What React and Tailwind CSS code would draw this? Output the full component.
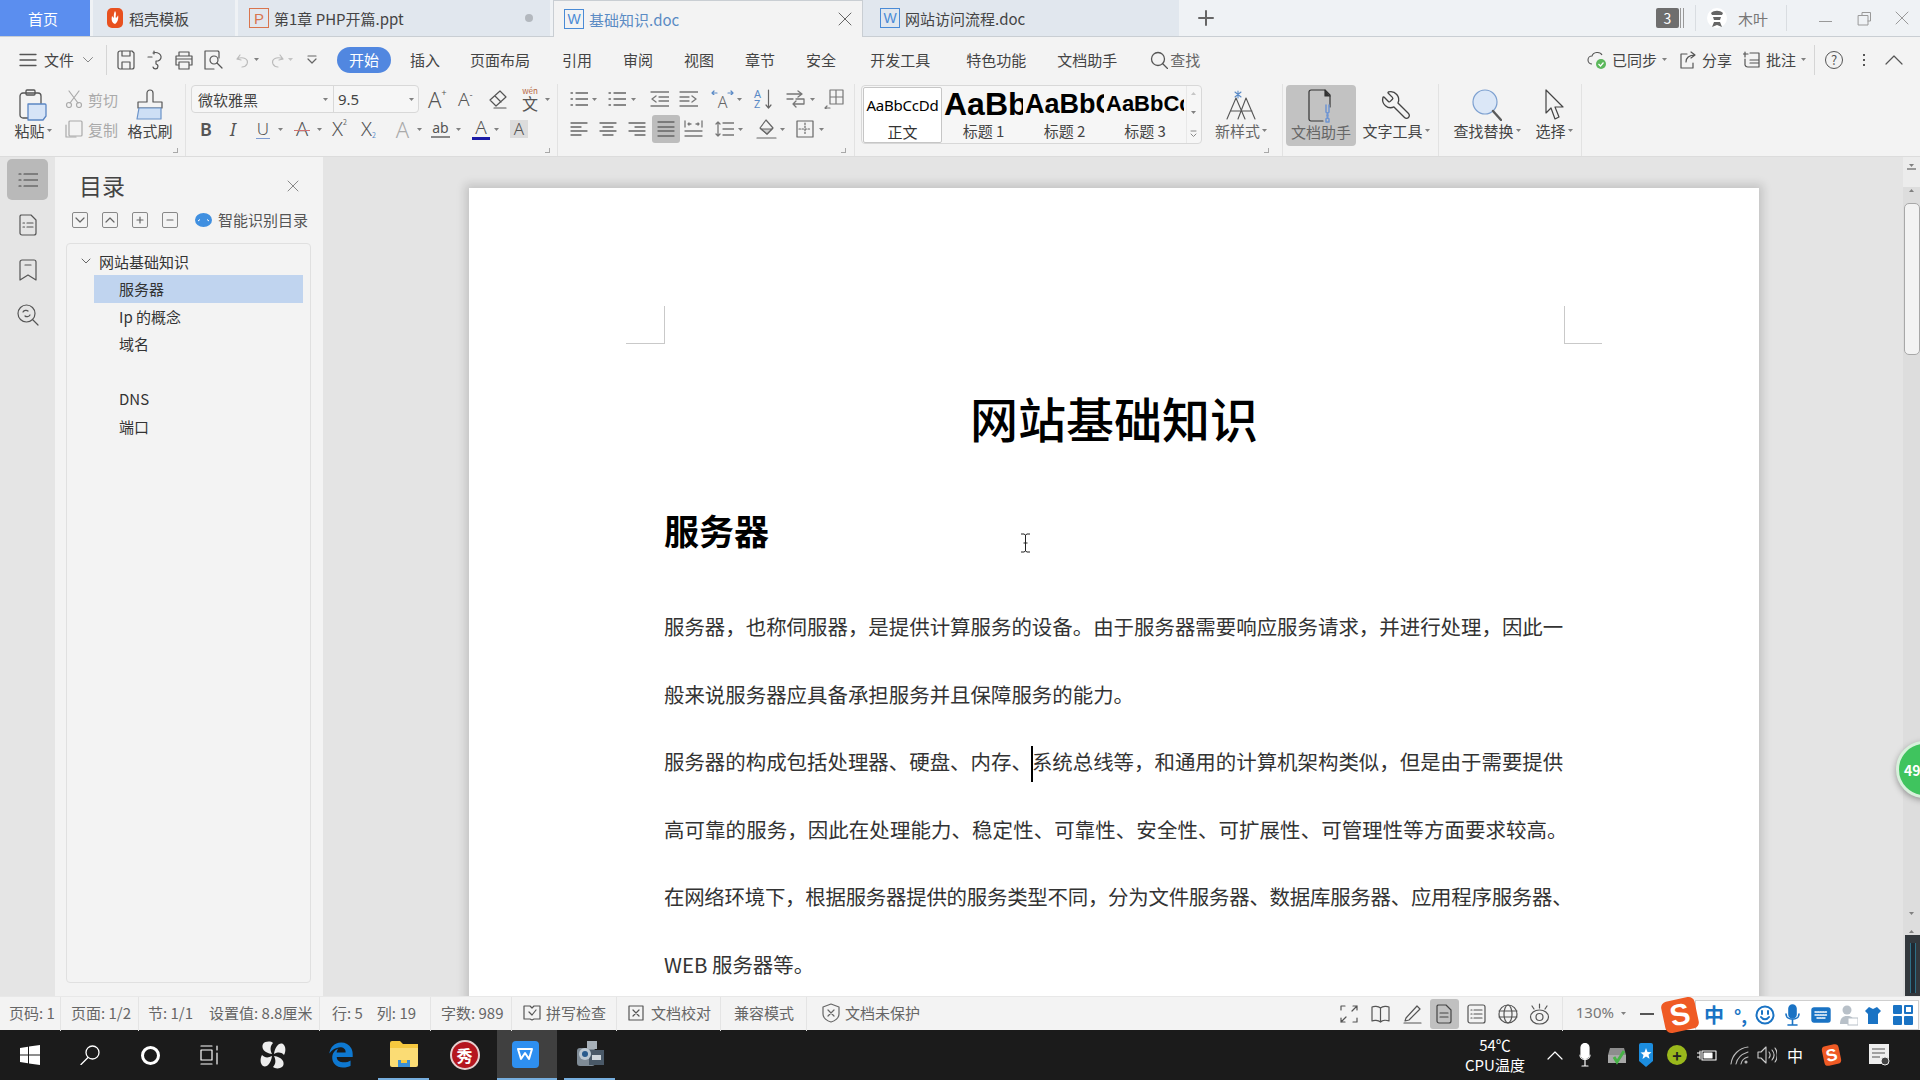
import React from 'react';
import { FaEdgeLegacy } from 'react-icons/fa';
import { Wrench } from 'lucide-react';

const I = ({ w = 20, h = 20, vb, c = '#555', sw = 1.2, className = '', children }) => (
  <svg width={w} height={h} viewBox={vb || `0 0 ${w} ${h}`} fill="none" stroke={c} strokeWidth={sw} strokeLinecap="round" strokeLinejoin="round" className={`shrink-0 ${className}`}>{children}</svg>
);
const Caret = ({ className = '' }) => (
  <svg width="5" height="3" viewBox="0 0 5 3" className={`shrink-0 ${className}`}><path d="M0 0h5L2.5 3z" fill="#808080" /></svg>
);
const Corner = ({ className = '' }) => <div className={`absolute bottom-[3px] w-[5px] h-[5px] border-r border-b border-[#a8a8a8] ${className}`} />;
const Lines = ({ rows, w = 18, className = '' }) => (
  <I w={w} h={18} c="#666" sw={1.3} className={className}>
    {rows.map((r, i) => <path key={i} d={`M${r[0]} ${r[2]}H${r[1]}`} />)}
  </I>
);
const Big = ({ icon, label, caret, className = '', muted }) => (
  <div className={`flex flex-col items-center ${className}`}>
    <div className="h-[38px] mt-[2px] flex items-center justify-center">{icon}</div>
    <div className={`h-[20px] -mt-[4px] flex items-center text-[15px] leading-none whitespace-nowrap ${muted ? 'text-[#666]' : 'text-[#444]'}`}>
      {label}{caret && <Caret className="ml-[2px]" />}
    </div>
  </div>
);

function TitleBar() {
  return (
    <div className="h-[37px] bg-[#eff2f5] border-b border-[#c9ced3] flex text-[15px] leading-none text-[#444]">
      <div className="w-[90px] h-[36px] bg-[#5b8eef] text-white flex items-center justify-center pr-[4px]">首页</div>
      <div className="w-[142px] h-[36px] ml-[3px] bg-[#e1e7ee] flex items-center pl-[14px]">
        <svg width="16" height="20" viewBox="0 0 16 20" className="shrink-0"><rect width="16" height="20" rx="5" fill="#e8511f" /><path d="M8 3c2 3 0 5 1 7 1-1 2-2 2-3 1 4-1 8-3 9-3-1-4-4-3-8l2 2c-.5-3 0-5 1-7z" fill="#fff" /></svg>
        <span className="ml-[6px]">稻壳模板</span>
      </div>
      <div className="w-[312px] h-[36px] ml-[3px] bg-[#e1e7ee] flex items-center pl-[11px]">
        <div className="w-[20px] h-[20px] border border-[#d9754e] flex items-center justify-center text-[#d9754e] text-[15px] leading-none font-['Liberation_Sans',sans-serif] shrink-0">P</div>
        <span className="ml-[5px] whitespace-nowrap">第1章 PHP开篇.ppt</span>
        <div className="w-[8px] h-[8px] rounded-full bg-[#b3b8be] ml-auto mr-[17px]" />
      </div>
      <div className="w-[310px] h-[37px] ml-[3px] bg-[#f3f3f3] border-x border-t border-[#c9ced3] flex items-center pl-[10px]">
        <div className="w-[20px] h-[20px] border border-[#4a8bd6] flex items-center justify-center text-[#4a8bd6] text-[14px] leading-none font-['Liberation_Sans',sans-serif] shrink-0">W</div>
        <span className="ml-[5px] text-[#5b8bc4] whitespace-nowrap">基础知识.doc</span>
        <I w={14} h={14} c="#666" sw={1} className="ml-auto mr-[10px]"><path d="M1 1l12 12M13 1L1 13" /></I>
      </div>
      <div className="w-[316px] h-[36px] bg-[#e1e7ee] flex items-center pl-[17px]">
        <div className="w-[20px] h-[20px] border border-[#4a8bd6] flex items-center justify-center text-[#4a8bd6] text-[14px] leading-none font-['Liberation_Sans',sans-serif] shrink-0">W</div>
        <span className="ml-[5px] whitespace-nowrap">网站访问流程.doc</span>
      </div>
      <I w={16} h={16} c="#666" sw={2} className="ml-[19px] mt-[10px]"><path d="M8 1v14M1 8h14" /></I>
      <div className="flex-1" />
      <div className="flex items-center h-[36px]">
        <div className="w-[23px] h-[20px] bg-[#6e6e6e] rounded-[2px] text-white text-[14px] flex items-center justify-center">3</div>
        <div className="w-[4px] h-[20px] ml-[1px] border-x border-[#999]" />
        <div className="w-px h-[26px] bg-[#d9dde1] ml-[11px]" />
        <svg width="20" height="24" viewBox="0 0 20 24" className="ml-[11px] shrink-0"><circle cx="10" cy="12" r="10" fill="#fff" /><path d="M4 7c3-3 9-3 12 0l-1 2H5zM6 11h8l-1 3H7zM7 16h6l2 5-5-2-5 2z" fill="#666" /></svg>
        <span className="ml-[11px] text-[#777]">木叶</span>
        <div className="w-px h-[26px] bg-[#d9dde1] ml-[18px]" />
        <div className="w-[13px] h-px bg-[#999] ml-[32px] mt-[6px]" />
        <I w={15} h={15} c="#999" sw={1} className="ml-[25px]"><path d="M5 4V1.5h8.5V10H11M1.5 4.5H11V14H1.5z" /></I>
        <I w={14} h={14} c="#999" sw={1} className="ml-[23px] mr-[11px]"><path d="M1 1l12 12M13 1L1 13" /></I>
      </div>
    </div>
  );
}

function MenuRow() {
  return (
    <div className="h-[47px] pb-[2px] flex items-center text-[15px] leading-none text-[#444] bg-[#f3f3f3]">
      <I w={18} h={14} c="#555" sw={1.3} className="ml-[19px]"><path d="M1 1.5h16M1 7h16M1 12.5h16" /></I>
      <span className="ml-[7px]">文件</span>
      <I w={10} h={6} c="#888" sw={1} className="ml-[9px]"><path d="M.5.5L5 5 9.5.5" /></I>
      <div className="w-px h-[30px] bg-[#d5d5d5] ml-[13px]" />
      <I w={18} h={20} c="#555" className="ml-[10px]"><path d="M3 1h12l2 2v14a2 2 0 0 1-2 2H3a2 2 0 0 1-2-2V3a2 2 0 0 1 2-2zM5 1v5h8V1M5 19v-7h8v7" /></I>
      <I w={18} h={20} c="#555" className="ml-[12px]"><path d="M6 3a5 4 0 1 1 5 8H9v3M9 14a2.5 2.5 0 1 1-3 3M1 7h4M7 1v3" /></I>
      <I w={18} h={20} c="#555" className="ml-[10px]"><path d="M4 6V2h10v4M4 15H1V6h16v9h-3M4 12h10v7H4zM1 9h16" /></I>
      <I w={20} h={20} c="#555" className="ml-[10px]"><path d="M15 1H2v18h9M15 1l1 1v6" /><circle cx="11" cy="10" r="4" /><path d="M14 13l5 5" /></I>
      <I w={14} h={16} c="#bbb" className="ml-[13px]"><path d="M4 3L1 7l4 1M1 7c6-3 12 0 10 5-1 2-3 3-5 3" /></I>
      <Caret className="ml-[4px]" />
      <I w={14} h={16} c="#bbb" className="ml-[11px]"><path d="M10 3l3 4-4 1M13 7C7 4 1 7 3 12c1 2 3 3 5 3" /></I>
      <Caret className="ml-[4px] opacity-40" />
      <I w={10} h={10} c="#666" className="ml-[14px]"><path d="M1 1h8M1 4l4 4 4-4" /></I>
      <div className="w-[54px] h-[26px] rounded-full bg-[#5187e0] text-white flex items-center justify-center ml-[20px]">开始</div>
      <span className="ml-[19px]">插入</span>
      <span className="ml-[30px]">页面布局</span>
      <span className="ml-[32px]">引用</span>
      <span className="ml-[31px]">审阅</span>
      <span className="ml-[31px]">视图</span>
      <span className="ml-[31px]">章节</span>
      <span className="ml-[31px]">安全</span>
      <span className="ml-[34px]">开发工具</span>
      <span className="ml-[36px]">特色功能</span>
      <span className="ml-[31px]">文档助手</span>
      <I w={18} h={18} c="#555" sw={1.3} className="ml-[33px]"><circle cx="8" cy="8" r="6.5" /><path d="M12.5 12.5l5 5" /></I>
      <span className="ml-[2px] text-[#666]">查找</span>
      <div className="flex-1" />
      <svg width="20" height="20" viewBox="0 0 20 20" fill="none" className="shrink-0"><path d="M5 14a4 4 0 0 1 0-8c1-4 8-5 10-1" stroke="#555" strokeWidth="1.1" /><circle cx="14" cy="14" r="5" fill="#5cb85c" /><path d="M11.5 14l2 2 3-3.5" stroke="#fff" strokeWidth="1.2" /></svg>
      <span className="ml-[5px]">已同步</span>
      <Caret className="ml-[5px]" />
      <I w={18} h={18} c="#555" className="ml-[12px]"><path d="M8 3H2v14h12v-5M7 11c0-4 3-7 9-7M12 1l4 3-4 3" /></I>
      <span className="ml-[5px]">分享</span>
      <I w={18} h={18} c="#555" className="ml-[11px]"><path d="M7 2h9v14H5a3 3 0 0 1-3-2V8M7 9h9M7 12h9M2 1v5M0 3h5" /></I>
      <span className="ml-[5px]">批注</span>
      <Caret className="ml-[5px]" />
      <div className="w-px h-[30px] bg-[#d5d5d5] ml-[8px]" />
      <div className="w-[18px] h-[18px] rounded-full border border-[#555] ml-[10px] flex items-center justify-center text-[13px] text-[#555]">?</div>
      <div className="ml-[20px] flex flex-col gap-[3px]"><div className="w-[2px] h-[2px] bg-[#555]" /><div className="w-[2px] h-[2px] bg-[#555]" /><div className="w-[2px] h-[2px] bg-[#555]" /></div>
      <I w={18} h={10} c="#555" className="ml-[20px] mr-[17px]"><path d="M1 9l8-8 8 8" /></I>
    </div>
  );
}

function FontGroup() {
  const A = 'text-[#555] font-["Noto_Sans",sans-serif] leading-none shrink-0';
  return (
    <div className="relative w-[372px] border-r border-[#e2e2e2] pl-[5px]">
      <div className="h-[30px] flex items-center">
        <div className="w-[228px] h-[28px] rounded-[4px] border border-[#d8d8d8] bg-[#f6f6f6] flex items-center text-[15px] leading-none text-[#444]">
          <span className="ml-[6px]">微软雅黑</span>
          <Caret className="ml-[65px]" />
          <div className="w-px h-[26px] bg-[#d8d8d8] ml-[5px]" />
          <span className="ml-[4px] font-['Noto_Sans',sans-serif]">9.5</span>
          <Caret className="ml-auto mr-[4px]" />
        </div>
        <div className="w-[18px] ml-[9px] flex items-start"><span className={`${A} text-[22px] font-light`}>A</span><span className="text-[9px] leading-none text-[#555]">+</span></div>
        <div className="w-[16px] ml-[12px] flex items-start"><span className={`${A} text-[19px] font-light`}>A</span><span className="text-[9px] leading-none text-[#555]">-</span></div>
        <I w={22} h={20} c="#555" className="ml-[14px]"><path d="M12 2L2 11l6 6 10-9zM2 11l6 6M7 7l6 6M6 19h12" /></I>
        <div className="w-[16px] ml-[12px] flex flex-col items-center"><span className="text-[8px] leading-none text-[#b5653c]">wén</span><span className="text-[16px] leading-none text-[#555]">文</span></div>
        <Caret className="ml-[7px]" />
      </div>
      <div className="h-[30px] flex items-center">
        <span className={`${A} ml-[9px] w-[12px] text-[18px] font-semibold`}>B</span>
        <span className={`${A} ml-[18px] w-[8px] text-[18px] italic`}>I</span>
        <div className="ml-[18px] w-[14px] flex flex-col items-center"><span className={`${A} text-[17px] font-light`}>U</span><div className="w-[14px] h-px bg-[#7d9bd1] mt-[1px]" /></div>
        <Caret className="ml-[8px]" />
        <span className={`${A} ml-[11px] w-[16px] text-[20px] font-light relative text-center`}>A<span className="absolute left-0 right-0 top-[11px] h-px bg-[#d07070]" /></span>
        <Caret className="ml-[7px]" />
        <div className="ml-[10px] w-[18px] flex items-start"><span className={`${A} text-[20px] font-light`}>X</span><span className="text-[7px] leading-none text-[#666]">2</span></div>
        <div className="ml-[11px] w-[17px] flex items-end"><span className={`${A} text-[20px] font-light`}>X</span><span className="text-[7px] leading-none text-[#5a8ac6]">2</span></div>
        <span className={`${A} ml-[15px] w-[19px] text-[22px] font-light text-[#aaa] text-center`}>A</span>
        <Caret className="ml-[5px]" />
        <div className="ml-[9px] w-[19px] border-b-2 border-[#888] text-[14px] leading-[16px] text-[#555] text-center font-['Noto_Sans',sans-serif]">ab</div>
        <Caret className="ml-[6px]" />
        <div className="ml-[11px] w-[18px] border-b-[3px] border-[#1a1aa6] text-[19px] leading-[19px] text-[#555] text-center font-['Noto_Sans',sans-serif] font-light">A</div>
        <Caret className="ml-[4px]" />
        <div className="ml-[11px] w-[18px] h-[18px] bg-[#dcdcdc] text-[17px] leading-[18px] text-[#555] text-center font-['Noto_Sans',sans-serif] font-light">A</div>
      </div>
      <Corner className="right-[7px]" />
    </div>
  );
}

function ParaGroup() {
  const list = (
    <I w={18} h={18} c="#666" sw={1.3}><path d="M6 3h12M6 9h12M6 15h12M1 3h1.5M1 9h1.5M1 15h1.5" /></I>
  );
  return (
    <div className="relative w-[297px] border-r border-[#e2e2e2]">
      <div className="h-[30px] flex items-center">
        <div className="ml-[12px]">{list}</div>
        <Caret className="ml-[4px]" />
        <div className="ml-[11px]">{list}</div>
        <Caret className="ml-[5px]" />
        <I w={19} h={18} c="#777" sw={1.3} className="ml-[14px]"><path d="M1 2h18M9 7h10M9 11h10M1 16h18M6 6L2 9l4 3" /></I>
        <I w={19} h={18} c="#777" sw={1.3} className="ml-[10px]"><path d="M1 2h18M1 7h9M1 11h9M1 16h18M13 6l4 3-4 3" /></I>
        <div className="ml-[13px] w-[23px] flex flex-col items-center relative text-[#666]"><I w={23} h={5} c="#5a8ac6"><path d="M1 3h5M3 1L1 3l2 2M22 3h-5M20 1l2 2-2 2" /></I><span className="text-[16px] leading-[14px] font-['Noto_Sans',sans-serif] font-light">A</span></div>
        <Caret className="ml-[3px]" />
        <div className="ml-[12px] w-[10px] flex flex-col text-[11px] leading-[10px] text-[#5a8ac6] font-['Noto_Sans',sans-serif]"><span>A</span><span>Z</span></div>
        <I w={7} h={20} c="#666" className="ml-[1px]"><path d="M3.5 1v18M1 16l2.5 3L6 16" /></I>
        <I w={19} h={18} c="#777" sw={1.3} className="ml-[14px]"><path d="M1 4h15M12 1l4 3-4 3M1 9h6M10 9h8M18 9v5H7M10 11l-3 3 3 3" /></I>
        <Caret className="ml-[5px]" />
        <I w={20} h={20} c="#777" className="ml-[9px]"><path d="M6 1h13v14H6M6 1v14M6 8h13M12 1v14M1 19h5M3 17l-2 2 2 2" /></I>
      </div>
      <div className="h-[30px] flex items-center">
        <Lines className="ml-[12px]" rows={[[1, 17, 3], [1, 11, 7], [1, 17, 11], [1, 11, 15]]} />
        <Lines className="ml-[11px]" rows={[[1, 17, 3], [4, 14, 7], [1, 17, 11], [4, 14, 15]]} />
        <Lines className="ml-[11px]" rows={[[1, 17, 3], [7, 17, 7], [1, 17, 11], [7, 17, 15]]} />
        <div className="ml-[6px] w-[28px] h-[28px] rounded-[3px] bg-[#bdbdbd] flex items-center justify-center">
          <Lines rows={[[1, 17, 2], [1, 17, 7], [1, 17, 11], [1, 17, 16]]} />
        </div>
        <I w={19} h={18} c="#777" sw={1.3} className="ml-[4px]"><path d="M1 1v6M18 1v6M4 4h3M5 3L4 4l1 1M15 4h-3M14 3l1 1-1 1M1 11h17M1 16h17" /></I>
        <I w={19} h={18} c="#777" sw={1.3} className="ml-[12px]"><path d="M8 3h11M8 9h11M8 15h11M3 2v14M1 4l2-2 2 2M1 14l2 2 2-2" /></I>
        <Caret className="ml-[4px]" />
        <I w={21} h={22} c="#666" className="ml-[13px]"><path d="M10 2l7 8-6 6-7-6zM1 20h19" /><path d="M5 11h11l-5 5z" fill="#ccc" /></I>
        <Caret className="ml-[3px]" />
        <I w={18} h={18} c="#666" className="ml-[11px]"><rect x="1" y="1" width="16" height="16" /><path d="M9 3v12M3 9h12" strokeDasharray="1.5 1.5" /></I>
        <Caret className="ml-[5px]" />
      </div>
      <Corner className="right-[8px]" />
    </div>
  );
}

function Gallery() {
  return (
    <div className="relative w-[428px] border-r border-[#e2e2e2] flex items-start">
      <div className="ml-[6px] mt-[1px] w-[341px] h-[59px] rounded-[4px] border border-[#d8d8d8] flex relative bg-[#f6f6f6]">
        <div className="ml-[1px] w-[79px] h-[56px] mt-[1px] bg-white border border-[#c6c6c6] rounded-[2px] flex flex-col items-center overflow-hidden">
          <div className="h-[35px] flex items-center text-[15px] leading-none text-black font-['Noto_Sans',sans-serif] tracking-[-0.2px]">AaBbCcDd</div>
          <div className="text-[15px] leading-[18px] text-[#333]">正文</div>
        </div>
        <div className="ml-[2px] w-[79px] flex flex-col items-center overflow-hidden">
          <div className="h-[36px] w-full flex items-center text-[32px] leading-none font-bold text-black font-['Liberation_Sans',sans-serif] whitespace-nowrap">AaBb</div>
          <div className="text-[15px] leading-[18px] text-[#444]">标题 1</div>
        </div>
        <div className="ml-[2px] w-[79px] flex flex-col items-center overflow-hidden">
          <div className="h-[36px] w-full flex items-center text-[27px] leading-none font-bold text-black font-['Liberation_Sans',sans-serif] whitespace-nowrap">AaBbCc</div>
          <div className="text-[15px] leading-[18px] text-[#444]">标题 2</div>
        </div>
        <div className="ml-[2px] w-[78px] flex flex-col items-center overflow-hidden">
          <div className="h-[36px] w-full flex items-center text-[22px] leading-none font-bold text-black font-['Liberation_Sans',sans-serif] whitespace-nowrap">AaBbCcD</div>
          <div className="text-[15px] leading-[18px] text-[#444]">标题 3</div>
        </div>
        <div className="ml-[2px] w-[13px] flex flex-col items-center justify-between py-[6px] border-l border-[#e8e8e8]">
          <Caret className="rotate-180 opacity-40" />
          <Caret />
          <I w={7} h={7} c="#888" sw={1}><path d="M1 1h5M1 4l2.5 2.5L6 4" /></I>
        </div>
      </div>
      <Big className="ml-[12px] w-[54px]" muted icon={
        <I w={32} h={30} c="#555" sw={1.1}><path d="M2 29L11 8l9 21M6 21h10M13 29L21 8l9 21M17 21h10" /><path d="M13 1v7M10 2l6 5M16 2l-6 5" stroke="#5a8ac6" /></I>
      } label="新样式" caret />
      <Corner className="right-[13px]" />
    </div>
  );
}

function Ribbon() {
  return (
    <div className="h-[73px] bg-[#f3f3f3] border-b border-[#dcdcdc] flex">
      <div className="relative w-[186px] border-r border-[#e2e2e2] flex">
        <Big className="ml-[14px] w-[38px]" icon={
          <I w={28} h={32} c="#555" sw={1.3}><rect x="1" y="4" width="21" height="25" rx="3" /><rect x="7" y="1" width="9" height="5" rx="1" /><path d="M9 15h17a1 1 0 0 1 1 1v11l-3 4H9z" fill="#d6e4f7" stroke="#5b86c4" /></I>
        } label="粘贴" caret />
        <div className="w-[60px] ml-[13px] flex flex-col text-[15px] leading-none text-[#aaa]">
          <div className="h-[30px] flex items-center">
            <I w={18} h={18} c="#aaa"><path d="M4 1l9 12M14 1L5 13" /><circle cx="4" cy="15" r="2.5" /><circle cx="14" cy="15" r="2.5" /></I>
            <span className="ml-[5px]">剪切</span>
          </div>
          <div className="h-[30px] flex items-center">
            <I w={18} h={18} c="#aaa"><rect x="4" y="1" width="13" height="15" rx="1" /><path d="M1 5v12h10" /></I>
            <span className="ml-[5px]">复制</span>
          </div>
        </div>
        <Big className="ml-[3px] w-[44px]" icon={
          <I w={28} h={32} c="#555" sw={1.2}><path d="M11 13V4a3 3 0 0 1 6 0v9h9v6H2v-6z" /><path d="M3 19h22v11H1z" fill="#cddff5" stroke="#6b93c9" /></I>
        } label="格式刷" />
        <Corner className="right-[7px]" />
      </div>
      <FontGroup />
      <ParaGroup />
      <Gallery />
      <div className="flex w-[156px] border-r border-[#e2e2e2]">
        <div className="ml-[3px] mt-[1px] w-[70px] h-[61px] rounded-[4px] bg-[#c2c2c2]">
          <Big muted icon={
            <I w={26} h={34} c="#333" sw={1.2}><path d="M15 32H3a2 2 0 0 1-2-2V3a2 2 0 0 1 2-2h14l5 5v12" /><path d="M17 1v6h5" fill="#333" /><path d="M18 16v7a4 4 0 0 1 0 7v3h3v-3a4 4 0 0 1 0-7v-7" stroke="#6f95d2" strokeWidth="1.5" /></I>
          } label="文档助手" />
        </div>
        <Big className="ml-[4px] w-[72px]" icon={
          <Wrench size={32} strokeWidth={1} color="#444" className="-scale-x-100" />
        } label="文字工具" caret />
      </div>
      <div className="flex w-[143px] border-r border-[#e2e2e2]">
        <Big className="ml-[12px] w-[72px]" icon={
          <I w={30} h={32} c="#5a5a5a" sw={1.2}><circle cx="13" cy="13" r="12" fill="#dbe7f7" stroke="#7da0d0" /><path d="M21 22l8 9" strokeWidth="2.4" /></I>
        } label="查找替换" caret />
        <Big className="ml-[11px] w-[40px]" icon={
          <I w={22} h={32} c="#444" sw={1.2}><path d="M3 1v23l5-5 4 11 4-2-4-10h8z" /></I>
        } label="选择" caret />
      </div>
    </div>
  );
}

function Rail() {
  return (
    <div className="w-[55px] bg-[#e5e5e5] flex flex-col items-center shrink-0">
      <div className="w-[41px] h-[41px] mt-[2px] rounded-[5px] bg-[#b9b9b9] flex items-center justify-center">
        <I w={20} h={16} c="#444" sw={1.2}><path d="M6 2h14M6 8h14M6 14h14M1 2h2M1 8h2M1 14h2" /></I>
      </div>
      <I w={18} h={22} c="#555" className="mt-[14px]"><path d="M2 1h10l5 5v13a2 2 0 0 1-2 2H3a2 2 0 0 1-2-2V2zM8 9h6M8 13h6M4 9h1.5M4 13h1.5" /></I>
      <I w={18} h={22} c="#555" className="mt-[23px]"><path d="M3 1h12a2 2 0 0 1 2 2v18l-8-5-8 5V3a2 2 0 0 1 2-2zM6 6h6" /></I>
      <I w={22} h={22} c="#555" className="mt-[23px]"><circle cx="9.5" cy="9.5" r="8.5" /><path d="M16 16l5 5M6 8c1-2 4-2 5-1M13 11c-1 2-4 2-5 1" /></I>
    </div>
  );
}

function Panel() {
  const Sq = ({ children, className = '' }) => (
    <div className={`w-[16px] h-[16px] rounded-[2px] border border-[#888] flex items-center justify-center ${className}`}>{children}</div>
  );
  const row = 'flex items-center pl-[52px] pb-[2px]';
  return (
    <div className="w-[268px] bg-[#f3f3f3] shrink-0 flex flex-col text-[#444]">
      <div className="h-[30px] mt-[13px] flex items-center">
        <span className="ml-[24px] text-[23px] leading-none text-[#444]">目录</span>
        <I w={12} h={12} c="#888" sw={1} className="ml-[162px] mt-[2px]"><path d="M1 1l10 10M11 1L1 11" /></I>
      </div>
      <div className="h-[16px] mt-[12px] flex items-center">
        <Sq className="ml-[17px]"><I w={10} h={6} c="#666"><path d="M1 1l4 4 4-4" /></I></Sq>
        <Sq className="ml-[14px]"><I w={10} h={6} c="#666"><path d="M1 5l4-4 4 4" /></I></Sq>
        <Sq className="ml-[14px]"><I w={8} h={8} c="#666"><path d="M4 1v6M1 4h6" /></I></Sq>
        <Sq className="ml-[14px]"><I w={8} h={8} c="#666"><path d="M1 4h6" /></I></Sq>
        <svg width="17" height="14" viewBox="0 0 17 14" className="ml-[17px] shrink-0"><ellipse cx="8.5" cy="7" rx="8.5" ry="7" fill="#3f8fe0" /><path d="M3 8l2-1.500M14 8l-2-1.500" stroke="#fff" strokeWidth="1" /></svg>
        <span className="ml-[6px] -mt-[2px] text-[15px] leading-none text-[#555] whitespace-nowrap">智能识别目录</span>
      </div>
      <div className="mt-[15px] ml-[11px] w-[245px] h-[740px] border border-[#e0e0e0] rounded-[4px] pt-[5px] text-[15px] leading-none text-[#333]">
        <div className="h-[26px] flex items-center pb-[2px]">
          <I w={10} h={6} c="#666" sw={1} className="ml-[14px]"><path d="M1 1l4 4 4-4" /></I>
          <span className="ml-[8px]">网站基础知识</span>
        </div>
        <div className="h-[28px] ml-[27px] w-[209px] bg-[#c0d4ef] flex items-center pl-[25px] pb-[2px]">服务器</div>
        <div className={`h-[28px] ${row}`}>Ip 的概念</div>
        <div className={`h-[27px] ${row}`}>域名</div>
        <div className="h-[27px]" />
        <div className={`h-[28px] ${row}`}>DNS</div>
        <div className={`h-[28px] ${row}`}>端口</div>
      </div>
    </div>
  );
}

function Doc() {
  const line = 'h-[67.5px] leading-[67.5px] text-[20.45px] text-[#333] whitespace-nowrap';
  return (
    <div className="flex-1 overflow-hidden pl-[146px] pt-[31px]">
      <div className="w-[1290px] h-[1000px] bg-white shadow-[0_0_9px_4px_rgba(0,0,0,0.14)] pt-[118px] pl-[157px]">
        <div className="w-[976px] flex justify-between">
          <div className="w-[39px] h-[38px] border-r border-b border-[#c9c9c9]" />
          <div className="w-[38px] h-[38px] border-l border-b border-[#c9c9c9]" />
        </div>
        <div className="ml-[38px] w-[900px]">
          <div className="mt-[43px] h-[60px] leading-[60px] text-[48px] font-medium text-black text-center">网站基础知识</div>
          <div className="mt-[61px] h-[44px] leading-[44px] text-[35px] font-bold text-black">服务器</div>
          <div className="mt-[41px]">
            <div className={line}>服务器，也称伺服器，是提供计算服务的设备。由于服务器需要响应服务请求，并进行处理，因此一</div>
            <div className={line}>般来说服务器应具备承担服务并且保障服务的能力。</div>
            <div className={line}>
              服务器的构成包括处理器、硬盘、内存、
              <span className="inline-block w-[2px] h-[36px] bg-black align-middle -mx-[1px]" />
              系统总线等，和通用的计算机架构类似，但是由于需要提供
            </div>
            <div className={`${line} tracking-[0.1px]`}>高可靠的服务，因此在处理能力、稳定性、可靠性、安全性、可扩展性、可管理性等方面要求较高。</div>
            <div className={`${line} tracking-[-0.25px]`}>在网络环境下，根据服务器提供的服务类型不同，分为文件服务器、数据库服务器、应用程序服务器、</div>
            <div className={line}>WEB 服务器等。</div>
          </div>
        </div>
      </div>
    </div>
  );
}

function Scrollbar() {
  return (
    <div className="w-[17px] bg-[#dddddd] flex flex-col items-center shrink-0">
      <div className="h-[30px] w-full bg-[#ececec] flex flex-col items-center pt-[7px]">
        <Caret /><div className="w-[9px] h-[2px] mt-[1px] border-y border-[#999]" />
      </div>
      <Caret className="rotate-180 mt-[2px]" />
      <div className="w-[16px] h-[152px] mt-[11px] rounded-[5px] bg-[#f3f3f3] border border-[#a8a8a8]" />
      <Caret className="mt-[557px]" />
      <Caret className="rotate-180 mt-[15px]" />
    </div>
  );
}

function StatusBar() {
  const seg = 'h-[34px] pb-[2px] flex items-center border-r border-[#e4e4e4] whitespace-nowrap shrink-0';
  return (
    <div className="relative h-[34px] bg-[#f3f3f3] border-t border-[#e8e8e8] flex items-center text-[15px] leading-none text-[#666]">
      <div className={`${seg} w-[61px] pl-[9px]`}>页码: 1</div>
      <div className={`${seg} w-[78px] pl-[10px]`}>页面: 1/2</div>
      <div className={`${seg} w-[181px] pl-[9px]`}>节: 1/1<span className="ml-[16px]">设置值: 8.8厘米</span></div>
      <div className={`${seg} w-[111px] pl-[12px]`}>行: 5<span className="ml-[14px]">列: 19</span></div>
      <div className={`${seg} w-[81px] pl-[10px]`}>字数: 989</div>
      <div className={`${seg} w-[105px] pl-[11px]`}>
        <I w={18} h={16} c="#555"><path d="M1 1h6l2 2 2-2h6v13h-6l-2 1-2-1H1zM6 7l3 3 4-5" /></I>
        <span className="ml-[5px]">拼写检查</span>
      </div>
      <div className={`${seg} w-[104px] pl-[11px]`}>
        <I w={16} h={16} c="#555"><path d="M1 1h14v14H1zM5 5l6 6M11 5l-6 6" /></I>
        <span className="ml-[7px]">文档校对</span>
      </div>
      <div className={`${seg} w-[86px] pl-[13px]`}>兼容模式</div>
      <div className="pl-[15px] pb-[2px] flex items-center whitespace-nowrap">
        <I w={18} h={20} c="#666"><path d="M9 1l8 3v7c0 4-4 7-8 8-4-1-8-4-8-8V4zM6 7l6 6M12 7l-6 6" /></I>
        <span className="ml-[5px]">文档未保护</span>
      </div>
      <div className="flex-1" />
      <I w={18} h={18} c="#555" sw={1.2}><path d="M1 5V1h4M13 1h4v4M1 13v4h4M17 13v4h-4M1 17l5-5M17 1l-5 5" /></I>
      <I w={19} h={18} c="#555" sw={1.2} className="ml-[13px]"><path d="M9.500 3C7 1 3 1 1 2v14c2-1 6-1 8.500 1 2-2 6-2 8.500-1V2c-2-1-6-1-8.500 1zM9.500 3v14" /></I>
      <I w={19} h={20} c="#555" sw={1.2} className="ml-[13px]"><path d="M3 14L14 2l3 3L6 16l-4 1zM1 19h17" /></I>
      <div className="ml-[8px] w-[29px] h-[30px] rounded-[3px] bg-[#c0c0c0] flex items-center justify-center">
        <I w={16} h={20} c="#444" sw={1.2}><path d="M2 1h8l5 5v11a2 2 0 0 1-2 2H3a2 2 0 0 1-2-2V2zM4 9h8M4 13h8" /></I>
      </div>
      <I w={19} h={20} c="#555" sw={1.2} className="ml-[8px]"><rect x="1" y="1" width="17" height="18" rx="2" /><path d="M7 6h8M7 10h8M7 14h8M4 6h1M4 10h1M4 14h1" /></I>
      <I w={20} h={20} c="#555" sw={1.2} className="ml-[12px]"><circle cx="10" cy="10" r="9" /><ellipse cx="10" cy="10" rx="4" ry="9" /><path d="M1 7h18M1 13h18" /></I>
      <I w={21} h={22} c="#555" sw={1.2} className="ml-[11px]"><ellipse cx="10.500" cy="14" rx="9" ry="7" /><circle cx="10.500" cy="14" r="3.500" /><path d="M10.500 1v4M3 3l2 3M18 3l-2 3" /></I>
      <div className="w-px h-[34px] bg-[#e4e4e4] ml-[12px]" />
      <span className="ml-[13px] pb-[2px] text-[#777] font-['Noto_Sans',sans-serif]">130%</span>
      <Caret className="ml-[7px]" />
      <div className="w-[14px] h-[2px] bg-[#555] ml-[14px] mr-[266px]" />
      <div className="absolute left-[1695px] top-[3px] w-[224px] h-[30px] bg-white border border-[#cfcfcf] flex items-center text-[#1a73c4]">
        <span className="ml-[8px] text-[20px] font-bold leading-none">中</span>
        <span className="ml-[10px] text-[18px] font-bold leading-none">°,</span>
        <I w={20} h={20} c="#1a73c4" sw={2} className="ml-[8px]"><circle cx="10" cy="10" r="8.500" /><path d="M6 12c2 3 6 3 8 0M7 6v3M13 6v3" /></I>
        <I w={15} h={22} c="#1a73c4" sw={1.600} className="ml-[10px]"><rect x="4" y="1" width="7" height="13" rx="3.500" fill="#1a73c4" /><path d="M1 10c0 7 13 7 13 0M7.500 16v5M3 21h9" /></I>
        <I w={20} h={16} c="#1a73c4" sw={1.400} className="ml-[11px]"><rect x="1" y="1" width="18" height="14" rx="2" fill="#1a73c4" /><path d="M4 5h12M4 8h12M6 11h8" stroke="#fff" strokeDasharray="1.500 1" /></I>
        <svg width="19" height="22" viewBox="0 0 19 22" className="ml-[8px] shrink-0"><circle cx="8" cy="6" r="4.500" fill="#b8c0c8" /><path d="M1 20c0-6 3-8 7-8s6 1 6 4v4z" fill="#b8c0c8" /><rect x="9" y="14" width="10" height="7" fill="#fff" stroke="#b8c0c8" /></svg>
        <svg width="16" height="18" viewBox="0 0 16 18" className="ml-[7px] shrink-0"><path d="M4 1l4 2 4-2 4 4-3 3v10H3V8L0 5z" fill="#1a73c4" /></svg>
        <div className="ml-[12px] grid grid-cols-2 gap-[2px]">
          <div className="w-[9px] h-[9px] rounded-[1px] bg-[#1a73c4]" /><div className="w-[9px] h-[9px] rounded-[1px] bg-white border-2 border-[#1a73c4]" />
          <div className="w-[9px] h-[9px] rounded-[1px] bg-[#1a73c4]" /><div className="w-[9px] h-[9px] rounded-[1px] bg-[#1a73c4]" />
        </div>
      </div>
      <div className="absolute left-[1663px] top-[2px] w-[34px] h-[32px] rounded-[6px] bg-[#ef5a24] rotate-[-12deg] flex items-center justify-center text-white text-[30px] font-bold leading-none font-['Liberation_Sans',sans-serif]">S</div>
    </div>
  );
}

function Taskbar() {
  const cell = 'h-[50px] flex items-center justify-center shrink-0';
  return (
    <div className="h-[50px] bg-[#1b1b1b] flex">
      <div className={`${cell} w-[60px]`}>
        <svg width="20" height="20" viewBox="0 0 20 20" fill="#fff"><path d="M0 3l8-1.200V9.500H0zM9 1.600L20 0v9.500H9zM0 10.500h8v7.700L0 17zM9 10.500h11V20L9 18.400z" /></svg>
      </div>
      <div className={`${cell} w-[60px]`}>
        <I w={20} h={20} c="#fff" sw={1.300}><circle cx="12.500" cy="7.500" r="6.500" /><path d="M8 12.500L1 19.500" /></I>
      </div>
      <div className={`${cell} w-[60px]`}>
        <div className="w-[19px] h-[19px] rounded-full border-[3px] border-white" />
      </div>
      <div className={`${cell} w-[60px]`}>
        <I w={20} h={20} c="#fff" sw={1.200}><path d="M1 1h11M1 19h11M1 5h11v10H1zM17 1v4M17 8v11" /></I>
      </div>
      <div className={`${cell} w-[66px]`}>
        <svg width="26" height="28" viewBox="0 0 26 28" fill="#ededed"><path d="M12 13C4 12 1 7 3 3c2-3 8-3 10-1-3 3-3 7-1 11zM14 13c1-7 5-12 9-10 3 2 3 8 1 11-3-3-6-3-10-1zM14 15c8 1 11 6 9 10-2 3-8 3-10 1 3-3 3-7 1-11zM12 15c-1 7-5 12-9 10-3-2-3-8-1-11 3 3 6 3 10 1z" /></svg>
      </div>
      <div className={`${cell} w-[70px]`}><FaEdgeLegacy size={26} color="#0e78d0" /></div>
      <div className={`${cell} w-[51px] ml-[2px] border-b-2 border-[#76aede]`}>
        <svg width="28" height="26" viewBox="0 0 28 26"><path d="M0 2a2 2 0 0 1 2-2h8l3 3h15v6H0z" fill="#f6c83f" /><path d="M0 7h28v17a2 2 0 0 1-2 2H2a2 2 0 0 1-2-2z" fill="#fbdc74" /><path d="M8 19h12v7H8z" fill="#3a8fd6" /><path d="M11 19h6v3h-6z" fill="#f6c83f" /></svg>
      </div>
      <div className={`${cell} w-[68px] pl-[3px]`}>
        <div className="w-[30px] h-[30px] rounded-full bg-[#b5161f] border-2 border-[#e6cfcf] flex items-center justify-center text-white text-[16px] leading-none font-bold">秀</div>
      </div>
      <div className={`${cell} w-[60px] pr-[4px] bg-[#404040] border-b-2 border-[#76aede]`}>
        <div className="w-[27px] h-[27px] rounded-[4px] bg-[#2e8ff0] flex items-center justify-center">
          <I w={16} h={13} c="#fff" sw={2}><path d="M1 1h14L12 11 8 5l-4 6z" /></I>
        </div>
      </div>
      <div className={`${cell} w-[51px] ml-[7px] border-b-2 border-[#76aede]`}>
        <svg width="30" height="28" viewBox="0 0 30 28"><rect x="2" y="8" width="18" height="18" rx="3" fill="#7f8b96" /><rect x="14" y="10" width="15" height="15" fill="#4a5968" /><circle cx="10" cy="14" r="6" fill="#bcc8d2" /><circle cx="10" cy="14" r="3" fill="#2a5b8c" /><path d="M12 1h10v8H12z" fill="#a7b0b8" /><rect x="17" y="15" width="9" height="5" fill="#cfd6dc" /></svg>
      </div>
      <div className="flex-1" />
      <div className="flex items-center h-[50px] text-white">
        <div className="w-[80px] flex flex-col items-center text-[15px] leading-[20px] whitespace-nowrap">
          <span>54℃</span>
          <span>CPU温度</span>
        </div>
        <I w={16} h={9} c="#fff" sw={1.200} className="ml-[12px]"><path d="M1 8l7-7 7 7" /></I>
        <I w={12} h={24} c="#fff" sw={1.200} className="ml-[16px]"><rect x="2" y="0.500" width="8" height="15" rx="4" fill="#fff" /><path d="M1 12c0 6 10 6 10 0M6 17v6M3 23h6" /></I>
        <svg width="20" height="20" viewBox="0 0 20 20" className="ml-[16px] shrink-0"><path d="M3 3h14l2 7H1z" fill="#8d8d8d" /><path d="M1 10h18v8H1z" fill="#a8a8a8" /><path d="M7 12l3 5 7-11" stroke="#47b347" strokeWidth="3" fill="none" /></svg>
        <svg width="14" height="24" viewBox="0 0 14 24" className="ml-[12px] shrink-0"><path d="M2 0h10a2 2 0 0 1 2 2v16l-7 6-7-6V2a2 2 0 0 1 2-2z" fill="#1c8ddf" /><path d="M7 5l1.500 4 4 .2-3 2.600 1 4-3.500-2.200L3.500 16l1-4-3-2.600 4-.2z" fill="#fff" /></svg>
        <div className="ml-[14px] w-[20px] h-[20px] rounded-full bg-[#9ab81c] flex items-center justify-center text-[#222] text-[16px] font-bold leading-none">+</div>
        <I w={20} h={14} c="#fff" sw={1.100} className="ml-[10px]"><rect x="5" y="3" width="14" height="9" /><rect x="7" y="5" width="8" height="5" fill="#fff" /><path d="M0 5h3M0 9h3M3 3v8" /></I>
        <I w={19} h={19} c="#bbb" sw={1.100} className="ml-[13px]"><path d="M1 18C2 9 9 2 18 1M6 18c1-6 6-10 12-12M11 18c.5-3 3-6 7-7" /><circle cx="16" cy="16" r="1" fill="#bbb" /></I>
        <I w={20} h={18} c="#ccc" sw={1.100} className="ml-[8px]"><path d="M1 6h3l5-5v16l-5-5H1zM12 6c1.500 2 1.500 4 0 6M15 4c2.500 3 2.500 7 0 10M18 2c3 4 3 10 0 14" /></I>
        <span className="ml-[10px] text-[16px] leading-none">中</span>
        <div className="ml-[20px] w-[17px] h-[20px] rounded-[4px] bg-[#ef5a24] rotate-[-12deg] flex items-center justify-center text-white text-[17px] font-bold leading-none font-['Liberation_Sans',sans-serif]">S</div>
        <svg width="21" height="22" viewBox="0 0 21 22" className="ml-[29px] mr-[30px] shrink-0"><path d="M0 0h20v14l-5 6H0z" fill="#eee" /><path d="M3 5h13M3 9h13M3 13h8" stroke="#555" strokeWidth="1" /><circle cx="16" cy="17" r="4" fill="#444" stroke="#eee" /></svg>
      </div>
    </div>
  );
}

export default function App() {
  return (
    <div lang="zh-CN" className="relative w-[1920px] h-[1080px] overflow-hidden flex flex-col bg-[#e4e4e4] font-['Noto_Sans_CJK_SC','Noto_Sans',sans-serif]">
      <TitleBar />
      <MenuRow />
      <Ribbon />
      <div className="flex-1 min-h-0 flex bg-[#e4e4e4]">
        <Rail />
        <Panel />
        <Doc />
        <Scrollbar />
      </div>
      <StatusBar />
      <Taskbar />
      <svg width="11" height="20" viewBox="0 0 11 20" fill="none" stroke="#222" strokeWidth="1" className="absolute left-[1020px] top-[533px]"><path d="M1 1h3l1.500 1L7 1h3M5.500 2v16M1 19h3l1.500-1L7 19h3M3.500 10h4" /></svg>
      <div className="absolute left-[1896px] top-[741px] w-[57px] h-[57px] rounded-full bg-[#3fc45e] border-[3px] border-[#d8f0dc] shadow-[0_2px_6px_rgba(0,0,0,0.35)] flex items-center pl-[5px] text-white text-[14px] font-bold leading-none">49</div>
      <div className="absolute left-[1905px] top-[935px] w-[15px] h-[61px] bg-[#33383d] flex justify-center pt-[8px]">
        <div className="w-[6px] h-[50px] bg-[#1f2a33] border-x border-[#2f6f86]" />
      </div>
    </div>
  );
}
